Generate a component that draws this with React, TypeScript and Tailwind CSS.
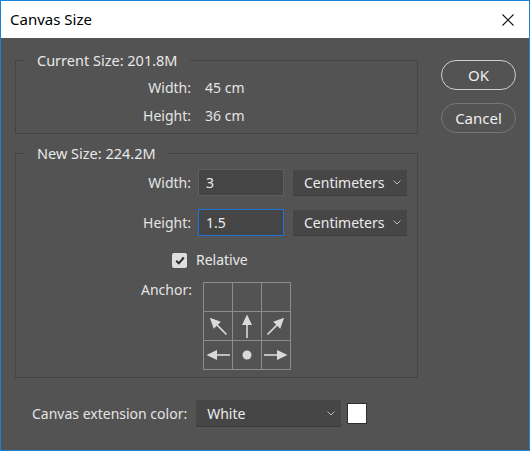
import React from "react";

const font = { fontFamily: '"Noto Sans", "Segoe UI", Arial, sans-serif' };

function Chevron() {
  return (
    <svg width="8" height="5" viewBox="0 0 8 5" className="text-[#bdbdbd]">
      <polyline points="0.5,0.5 4,4 7.5,0.5" fill="none" stroke="currentColor" strokeWidth="1" />
    </svg>
  );
}

function Select({ value, className }: { value: string; className: string }) {
  return (
    <div className={`flex items-center justify-between bg-[#464646] pr-[6px] shadow-[inset_0_-1px_0_#3c3c3c] ${className}`}>
      <span className="pl-[11px] text-[14px] leading-[20px] text-[#ececec]">{value}</span>
      <Chevron />
    </div>
  );
}

function Field({ label, value, focused }: { label: string; value: string; focused?: boolean }) {
  return (
    <div className="flex items-center">
      <span className="w-[175px] text-right text-[14px] leading-[20px] text-[#e4e4e4]">{label}</span>
      <div
        className={`ml-[7px] flex h-[27px] w-[86px] items-center border bg-[#454545] pl-[7px] text-[14px] text-[#ececec] ${
          focused ? "border-[#1f72d8]" : "border-[#5e5e5e]"
        }`}
      >
        {value}
      </div>
      <Select value="Centimeters" className="ml-[9px] h-[26px] w-[114px]" />
    </div>
  );
}

function Arrow({ kind }: { kind: string }) {
  const fill = "#dadada";
  if (kind === "dot") {
    return (
      <svg width="28" height="28" viewBox="0 0 28 28">
        <circle cx="14" cy="14" r="4.5" fill={fill} />
      </svg>
    );
  }
  const rot: Record<string, number> = { up: 0, ul: -45, ur: 45, left: -90, right: 90 };
  return (
    <svg width="28" height="28" viewBox="0 0 28 28">
      <g transform={`rotate(${rot[kind]} 14 14)`}>
        <line x1="14" y1="26" x2="14" y2="10" stroke={fill} strokeWidth="1.6" />
        <polygon points="14,2.5 9,13 19,13" fill={fill} />
      </g>
    </svg>
  );
}

function Anchor() {
  const cells = ["", "", "", "ul", "up", "ur", "left", "dot", "right"];
  return (
    <div className="grid grid-cols-[repeat(3,28px)] gap-px bg-[#8c8c8c] p-px">
      {cells.map((c, i) => (
        <div key={i} className="flex h-[28px] w-[28px] items-center justify-center bg-[#535353]">
          {c && <Arrow kind={c} />}
        </div>
      ))}
    </div>
  );
}

export default function App() {
  return (
    <div style={font} className="flex h-[451px] w-[530px] flex-col border border-[#1883d7] bg-[#535353]">
      <div className="flex h-[37px] items-center justify-between bg-white pl-[9px] pr-[15px]">
        <span className="text-[15px] text-black">Canvas Size</span>
        <svg width="12" height="12" viewBox="0 0 12 12">
          <path d="M0.5 0.5 L11.5 11.5 M11.5 0.5 L0.5 11.5" stroke="#111" strokeWidth="1.1" />
        </svg>
      </div>

      <div className="flex flex-1 pl-[14px] pt-[13px]">
        <div className="flex w-[403px] flex-col">
          <fieldset className="m-0 h-[83px] border border-[#444444] p-0">
            <legend className="ml-[9px] px-[12px] text-[14.5px] leading-[18px] text-[#e8e8e8]">Current Size: 201.8M</legend>
            <div className="mt-[9px] flex flex-col gap-[8px] text-[14px] leading-[20px] text-[#e4e4e4]">
              <div className="flex">
                <span className="w-[175px] text-right">Width:</span>
                <span className="pl-[14px]">45 cm</span>
              </div>
              <div className="flex">
                <span className="w-[175px] text-right">Height:</span>
                <span className="pl-[14px]">36 cm</span>
              </div>
            </div>
          </fieldset>

          <fieldset className="m-0 mt-[10px] h-[234px] border border-[#444444] p-0">
            <legend className="ml-[9px] px-[12px] text-[14.5px] leading-[18px] text-[#e8e8e8]">New Size: 224.2M</legend>
            <div className="mt-[7px] flex flex-col gap-[13px]">
              <Field label="Width:" value="3" />
              <Field label="Height:" value="1.5" focused />
            </div>
            <div className="mt-[14px] flex items-center pl-[156px]">
              <div className="flex h-[15px] w-[15px] items-center justify-center rounded-[2px] bg-[#dedede]">
                <svg width="10" height="9" viewBox="0 0 10 9">
                  <polyline points="1.2,4.8 3.8,7.3 8.8,1.5" fill="none" stroke="#2b2b2b" strokeWidth="2" />
                </svg>
              </div>
              <span className="ml-[9px] text-[14px] leading-[20px] text-[#e8e8e8]">Relative</span>
            </div>
            <div className="mt-[12px] flex items-start">
              <span className="mt-[-2px] w-[176px] text-right text-[14px] leading-[20px] text-[#e4e4e4]">Anchor:</span>
              <div className="ml-[11px]">
                <Anchor />
              </div>
            </div>
          </fieldset>

          <div className="mt-[22px] flex items-center">
            <span className="ml-[17px] text-[14px] leading-[20px] text-[#e4e4e4]">Canvas extension color:</span>
            <Select value="White" className="ml-[9px] h-[27px] w-[145px]" />
            <div className="ml-[6px] h-[21px] w-[20px] border border-[#2f2f2f] bg-white" />
          </div>
        </div>

        <div className="ml-[23px] mt-[9px] flex flex-col gap-[13px]">
          <button className="flex h-[30px] w-[75px] items-center justify-center rounded-full border border-[#cfcfcf] text-[15px] text-[#eeeeee]">
            OK
          </button>
          <button className="flex h-[30px] w-[75px] items-center justify-center rounded-full border border-[#767676] text-[15px] text-[#eeeeee]">
            Cancel
          </button>
        </div>
      </div>
    </div>
  );
}
